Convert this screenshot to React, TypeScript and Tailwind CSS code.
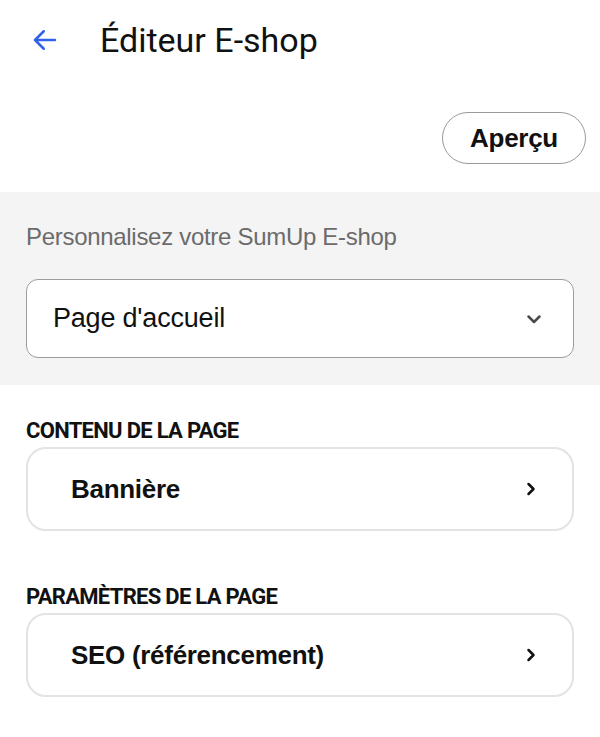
import React from "react";

const sans = "'Liberation Sans', Arial, sans-serif";
const roboto = "Roboto, 'Liberation Sans', sans-serif";

function ChevronRight() {
  return (
    <svg width="14" height="16" viewBox="0 0 14 16" fill="none">
      <path d="M4.5 3L9.5 8l-5 5" stroke="#111" strokeWidth="2.5" strokeLinecap="round" strokeLinejoin="round" />
    </svg>
  );
}

function ChevronDown() {
  return (
    <svg width="18" height="16" viewBox="0 0 18 16" fill="none">
      <path d="M3.5 5.5L9 11l5.5-5.5" stroke="#4a4a4a" strokeWidth="2.5" strokeLinecap="round" strokeLinejoin="round" />
    </svg>
  );
}

function NavRow({ label }: { label: string }) {
  return (
    <button className="flex items-center justify-between w-full h-[84px] rounded-[20px] border-2 border-[#e3e3e3] bg-white pl-[43px] pr-[34px] text-left">
      <span className="text-[26px] font-bold text-[#111] tracking-[-0.3px]">{label}</span>
      <ChevronRight />
    </button>
  );
}

function SectionTitle({ children, className }: { children: React.ReactNode; className: string }) {
  return (
    <h2 className={`${className} text-[22px] font-bold text-[#111] leading-[24px] tracking-[-0.7px]`} style={{ fontFamily: roboto }}>
      {children}
    </h2>
  );
}

export default function App() {
  return (
    <div className="w-[600px] h-[737px] bg-white overflow-hidden" style={{ fontFamily: sans }}>
      <header className="flex items-center h-[80px] pl-[30px]">
        <svg width="30" height="30" viewBox="0 0 24 24" fill="none" className="mr-[40px]">
          <path d="M20 12H4M11 5l-7 7 7 7" stroke="#3063e9" strokeWidth="2" strokeLinecap="round" strokeLinejoin="round" />
        </svg>
        <h1 className="text-[34px] text-[#111]" style={{ fontFamily: roboto }}>
          Éditeur E-shop
        </h1>
      </header>

      <div className="flex justify-end pr-[14px] pt-[32px] pb-[28px]">
        <button className="h-[52px] w-[144px] rounded-full border-[1.5px] border-[#9a9a9a] text-[26px] font-bold text-[#111] tracking-[-0.3px]">
          Aperçu
        </button>
      </div>

      <section className="bg-[#f4f4f4] px-[26px] pt-[31px] pb-[27px]">
        <p className="text-[24px] text-[#6b6b6b] leading-[28px] tracking-[-0.3px]">Personnalisez votre SumUp E-shop</p>
        <div className="mt-[28px] flex items-center justify-between h-[79px] rounded-[12px] border-[1.5px] border-[#9c9c9c] bg-white pl-[26px] pr-[30px]">
          <span className="text-[27px] text-[#111] tracking-[-0.2px]">Page d'accueil</span>
          <ChevronDown />
        </div>
      </section>

      <div className="px-[26px]">
        <SectionTitle className="mt-[34px]">CONTENU DE LA PAGE</SectionTitle>
        <div className="mt-[4px]">
          <NavRow label="Bannière" />
        </div>
        <SectionTitle className="mt-[54px]">PARAMÈTRES DE LA PAGE</SectionTitle>
        <div className="mt-[4px]">
          <NavRow label="SEO (référencement)" />
        </div>
      </div>
    </div>
  );
}
